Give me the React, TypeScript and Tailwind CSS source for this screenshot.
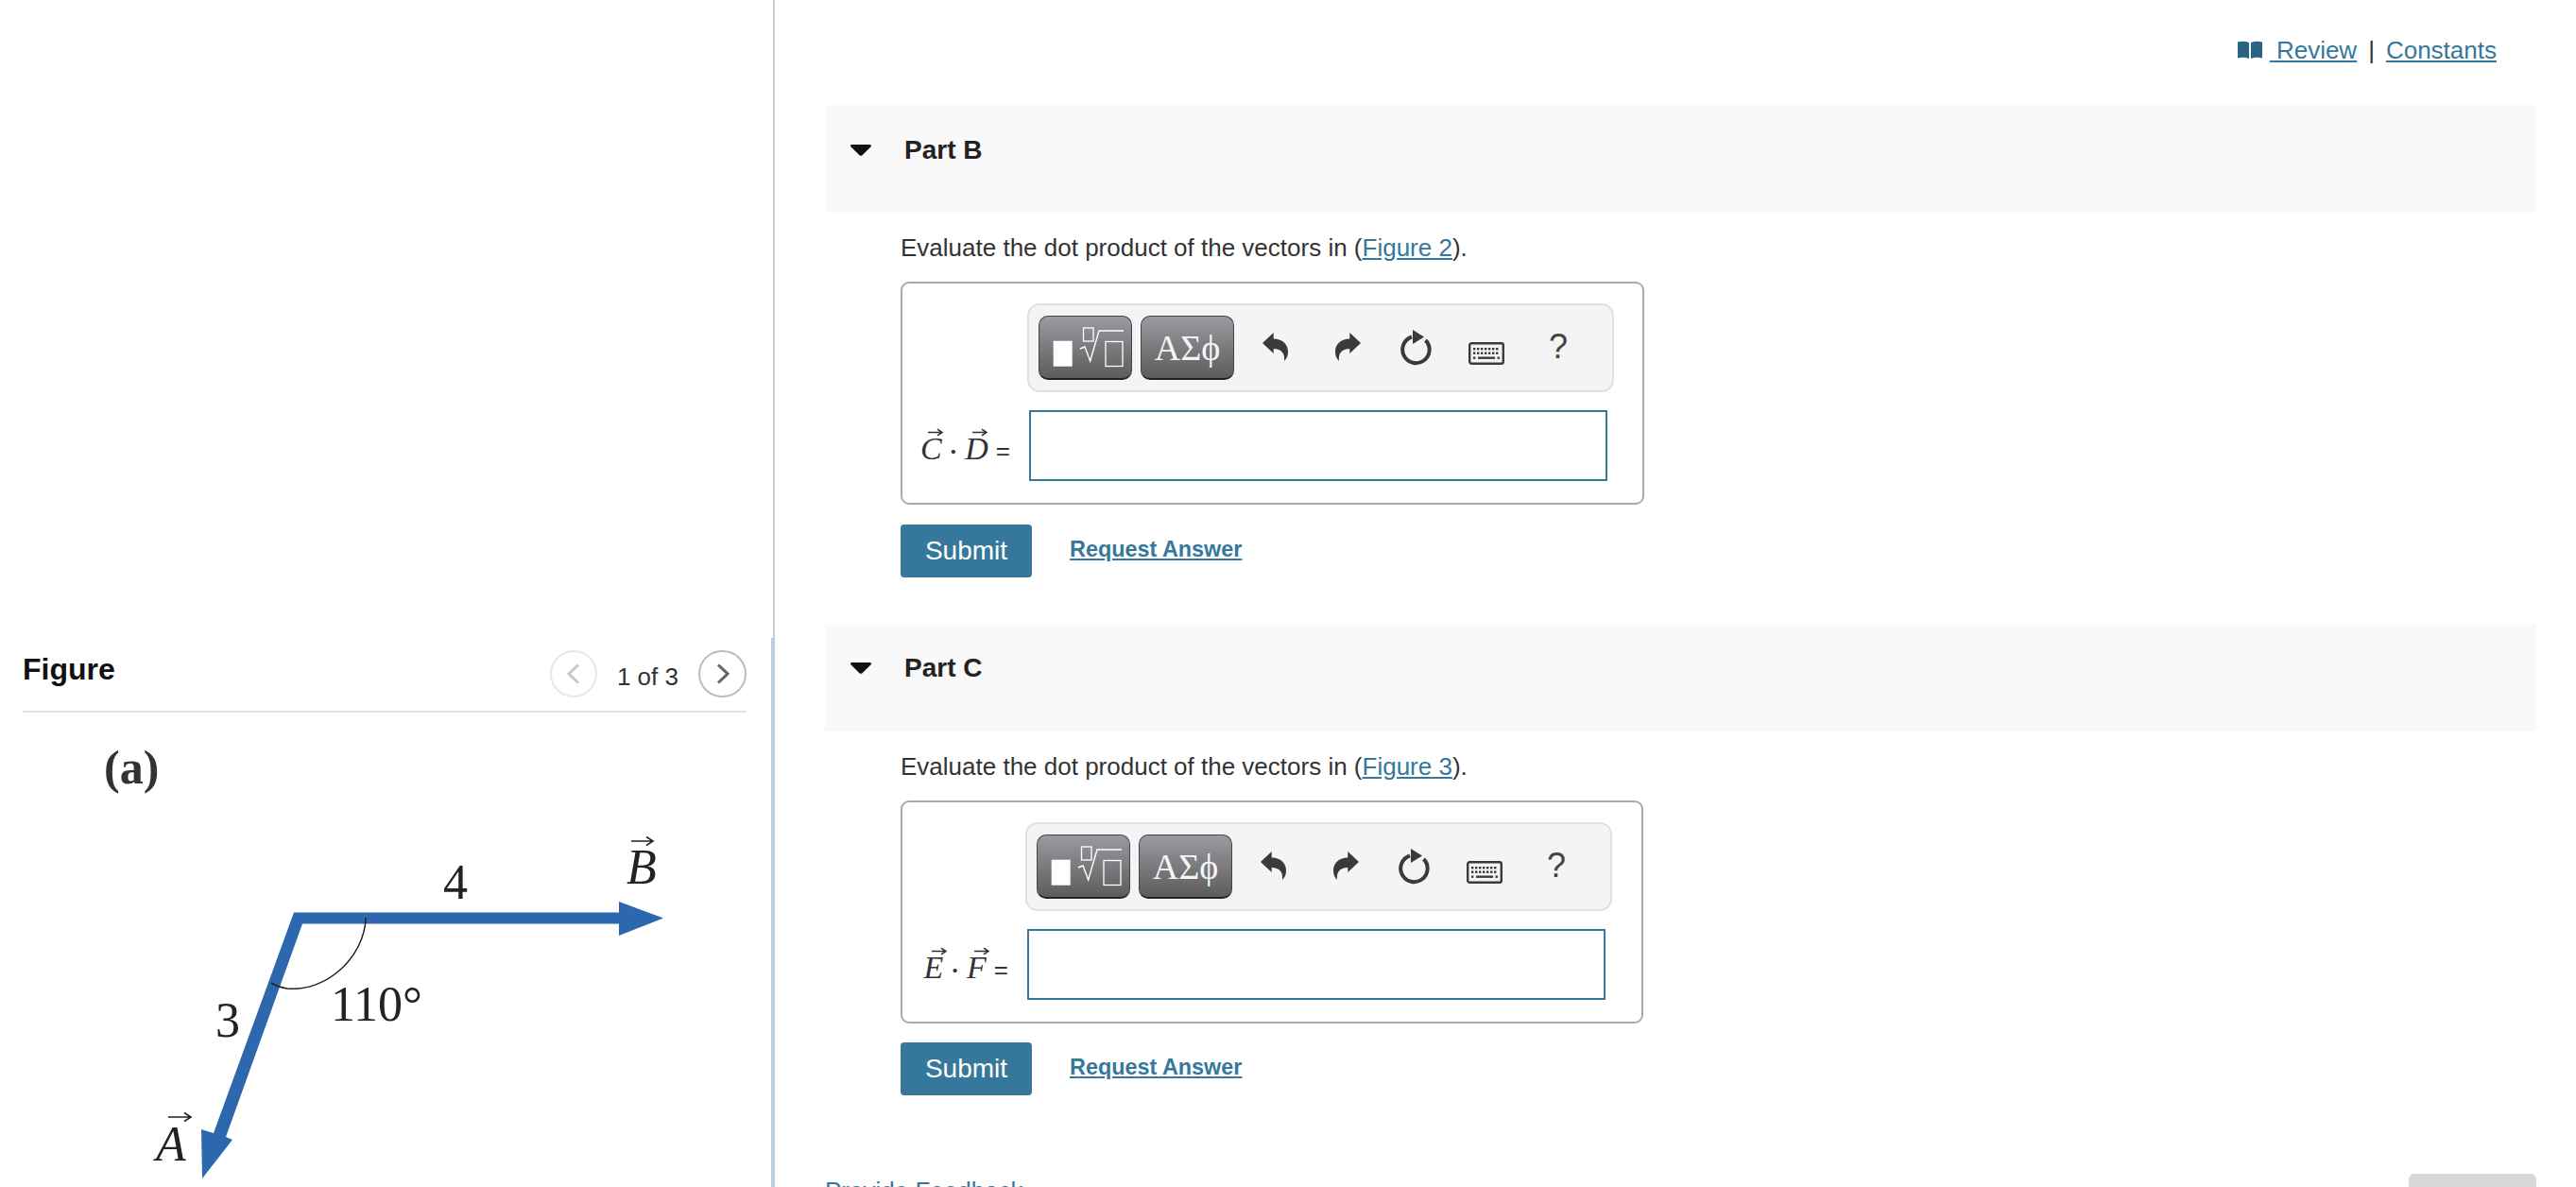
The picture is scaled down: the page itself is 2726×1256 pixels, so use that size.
import React from "react";

const sans = "font-['Liberation_Sans',Arial,sans-serif]";

function Vec({ c }: { c: string }) {
  return (
    <span className="relative inline-block">
      {c}
      <svg className="absolute left-[8px] top-[-2px] w-[16px] h-[9px]" viewBox="0 0 16 9">
        <path d="M0 4.5H14M10 1.2L15 4.5L10 7.8" fill="none" stroke="#333" strokeWidth="1.6" />
      </svg>
    </span>
  );
}

function MathIcon() {
  return (
    <svg width="99" height="68" viewBox="0 0 99 68" className="absolute left-[-1px] top-[-1px]">
      <rect x="15.7" y="26.7" width="20" height="27" fill="#fff" />
      <rect x="47.5" y="13" width="10.5" height="14" fill="none" stroke="#fff" strokeWidth="1.3" />
      <path d="M44 35L49 33L54.7 48L64 16H90" fill="none" stroke="#fff" strokeWidth="1.4" />
      <rect x="71" y="27.5" width="18" height="26" fill="none" stroke="#fff" strokeWidth="1.3" />
    </svg>
  );
}

function Undo() {
  return (
    <svg width="27" height="30" viewBox="0 0 27 30">
      <path d="M0 11L11.7 0V6.5C22 6.5 27 13 27 20C27 24 26 27 23 30C24 22 20 17 11.7 17V22Z" fill="#3a3a3a" />
    </svg>
  );
}

function Redo() {
  return (
    <svg width="27" height="30" viewBox="0 0 27 30">
      <path d="M27 11L15.3 0V6.5C5 6.5 0 13 0 20C0 24 1 27 4 30C3 22 7 17 15.3 17V22Z" fill="#3a3a3a" />
    </svg>
  );
}

function Reset() {
  return (
    <svg width="34" height="38" viewBox="0 0 34 38">
      <path d="M12 7.5A14.2 14.2 0 1 0 26.5 11" fill="none" stroke="#3a3a3a" strokeWidth="4" />
      <path d="M13 0L25 7.5L13 15Z" fill="#3a3a3a" />
    </svg>
  );
}

function Keyboard() {
  const rows = [
    { y: 6, xs: [6, 10, 14, 18, 22, 26, 30] },
    { y: 10.5, xs: [6, 10, 14, 18, 22, 26, 30] },
  ];
  return (
    <svg width="38" height="24" viewBox="0 0 38 24">
      <rect x="1.2" y="1.2" width="35.6" height="21.6" rx="2" fill="none" stroke="#3a3a3a" strokeWidth="2.4" />
      {rows.map((r) => r.xs.map((x) => <rect key={`${r.y}-${x}`} x={x - 1} y={r.y} width="2.4" height="2.4" fill="#3a3a3a" />))}
      <rect x="5" y="15.5" width="2.4" height="2.4" fill="#3a3a3a" />
      <rect x="10" y="15.5" width="18" height="2.4" fill="#3a3a3a" />
      <rect x="30.5" y="15.5" width="2.4" height="2.4" fill="#3a3a3a" />
    </svg>
  );
}

function Part({
  name,
  fig,
  left,
  right,
  narrow,
}: {
  name: string;
  fig: string;
  left: string;
  right: string;
  narrow?: boolean;
}) {
  return (
    <section>
      <div className={`h-[114px] bg-[#f9f9f9] pl-[27px] ${narrow ? "pt-[29px]" : "pt-[30px]"} flex items-start`}>
        <svg width="22" height="12" viewBox="0 0 22 12" className="mt-[12px]">
          <path d="M1.5 0H20.5C22 0 22.4 1.4 21.4 2.4L12.5 11.2C11.6 12 10.4 12 9.5 11.2L.6 2.4C-.4 1.4 0 0 1.5 0Z" fill="#111" />
        </svg>
        <h2 className="ml-[35px] text-[28px] leading-[36px] font-bold text-[#222]">{name}</h2>
      </div>
      <div className="pl-[80px]">
        <p className="mt-[19px] text-[26px] leading-[36px] text-[#333]">
          Evaluate the dot product of the vectors in (<a className="text-[#35789b] underline">{fig}</a>).
        </p>
        <div className={`mt-[18px] h-[236px] border-2 border-[#aaaaaa] rounded-[9px] ${narrow ? "w-[786px] pl-[130px]" : "w-[787px] pl-[132px]"} pt-[21px]`}>
          <div className="w-[621px] h-[94px] bg-[#f4f4f4] border-2 border-[#e0e0e0] rounded-[13px] pl-[10px] pt-[11px] flex items-start">
            <button className="relative w-[99px] h-[68px] rounded-[10px] border border-[#444] border-b-2 border-b-[#222] bg-gradient-to-b from-[#9b9aa2] to-[#5d5d5d]">
              <MathIcon />
            </button>
            <button className="ml-[9px] w-[99px] h-[68px] rounded-[10px] border border-[#444] border-b-2 border-b-[#222] bg-gradient-to-b from-[#9b9aa2] to-[#5d5d5d] text-[#f4f4f4] text-[38px] leading-[58px] font-['Liberation_Serif',serif]">
              ΑΣϕ
            </button>
            <span className="ml-[30px] mt-[18px]"><Undo /></span>
            <span className="ml-[50px] mt-[18px]"><Redo /></span>
            <span className="ml-[42px] mt-[15px]"><Reset /></span>
            <span className="ml-[38px] mt-[28px]"><Keyboard /></span>
            <span className="ml-[47px] mt-[11px] text-[36px] leading-[44px] text-[#444]">?</span>
          </div>
          <div className="relative mt-[19px] ml-[2px] w-[612px] h-[75px] border-2 border-[#35789b] bg-white">
            <div className="absolute right-[630px] top-[19px] flex items-baseline whitespace-nowrap text-[#333]">
              <span className="italic text-[34px] leading-[40px] font-['Liberation_Serif',serif]"><Vec c={left} /></span>
              <span className="mx-[8px] text-[26px] font-bold leading-[40px] font-['Liberation_Serif',serif]">·</span>
              <span className="italic text-[34px] leading-[40px] font-['Liberation_Serif',serif]"><Vec c={right} /></span>
              <span className="ml-[8px] text-[26px] leading-[40px]">=</span>
            </div>
          </div>
        </div>
        <div className={`${narrow ? "mt-[20px]" : "mt-[21px]"} flex items-center`}>
          <button className="w-[139px] h-[56px] rounded-[4px] bg-[#35789b] text-white text-[28px] leading-[56px]">Submit</button>
          <a className="ml-[40px] mb-[2px] text-[23.4px] font-bold text-[#35789b] underline">Request Answer</a>
        </div>
      </div>
    </section>
  );
}

export default function App() {
  return (
    <div className={`flex w-[2726px] h-[1256px] overflow-hidden bg-white ${sans}`}>
      <aside className="w-[820px] shrink-0 flex flex-col">
        <div className="h-[675px] shrink-0 border-r-2 border-[#c4cddb]" />
        <div className="flex-1 border-r-4 border-[#bfcde2] pl-[24px] pr-[26px] pt-[13px]">
          <div className="h-[66px] border-b-2 border-[#e0e0e0] flex items-start">
            <h2 className="pt-[1px] text-[32px] leading-[38px] font-bold text-[#111]">Figure</h2>
            <div className="ml-auto flex items-center">
              <span className="w-[50px] h-[50px] rounded-full border-2 border-[#e8e8e8] flex items-center justify-center">
                <svg width="14" height="22" viewBox="0 0 14 22"><path d="M12 1.5L2 11L12 20.500" fill="none" stroke="#c8c8c8" strokeWidth="3" /></svg>
              </span>
              <span className="mx-[21px] pt-[6px] text-[26px] leading-[36px] text-[#333]">1 of 3</span>
              <span className="w-[51px] h-[50px] rounded-full border-2 border-[#bdbdbd] flex items-center justify-center">
                <svg width="14" height="22" viewBox="0 0 14 22"><path d="M2 1.5L12 11L2 20.500" fill="none" stroke="#666" strokeWidth="3" /></svg>
              </span>
            </div>
          </div>
          <svg width="766" height="500" viewBox="24 756 766 500" className="block font-['Liberation_Serif',serif]">
            <text x="110" y="831" fontSize="50" fontWeight="700" fill="#333">(a)</text>
            <path d="M311 967.500H655V956L702 973.500L655 992V979.500H320L239 1205L246 1208L214 1249L213 1197L226 1201Z" fill="#2d67ad" />
            <path d="M387 973C386 1015 345 1052 304 1048C297 1047 292 1045 287 1042" fill="none" stroke="#222" strokeWidth="1.5" />
            <text x="469" y="953" fontSize="52" fill="#222">4</text>
            <text x="228" y="1099" fontSize="52" fill="#222">3</text>
            <text x="350" y="1082" fontSize="52" fill="#222">110°</text>
            <text x="663" y="937" fontSize="52" fontStyle="italic" fill="#222">B</text>
            <path d="M668 892H690M684 887.500L691 892L684 896.500" fill="none" stroke="#222" strokeWidth="1.6" />
            <text x="165" y="1230" fontSize="52" fontStyle="italic" fill="#222">A</text>
            <path d="M178 1184H201M195 1179.500L202 1184L195 1188.500" fill="none" stroke="#222" strokeWidth="1.6" />
          </svg>
        </div>
      </aside>
      <main className="flex-1 min-w-0 pl-[53px] pr-[42px]">
        <div className="h-[111px] pt-[35px] pr-[42px] flex items-start justify-end text-[26px] leading-[36px]">
          <svg width="26" height="20" viewBox="0 0 26 20" className="mt-[8px] mr-[8px]">
            <path d="M0 1.500C4 .5 8 .5 12 2V19C8 17.500 4 17.500 0 18.500ZM26 1.500C22 .5 18 .5 14 2V19C18 17.500 22 17.500 26 18.500Z" fill="#2a6484" />
          </svg>
          <a className="text-[#35789b] underline whitespace-pre"> Review</a>
          <span className="mx-[12px] text-[#333]">|</span>
          <a className="text-[#35789b] underline">Constants</a>
        </div>
        <Part name="Part B" fig="Figure 2" left="C" right="D" />
        <div className="h-[49px]" />
        <Part name="Part C" fig="Figure 3" left="E" right="F" narrow />
        <div className="mt-[83px] flex items-start justify-between">
          <a className="text-[26px] leading-[36px] text-[#35789b]">Provide Feedback</a>
          <div className="w-[135px] h-[60px] rounded-t-[6px] bg-[#d8d8d8]" />
        </div>
      </main>
    </div>
  );
}
